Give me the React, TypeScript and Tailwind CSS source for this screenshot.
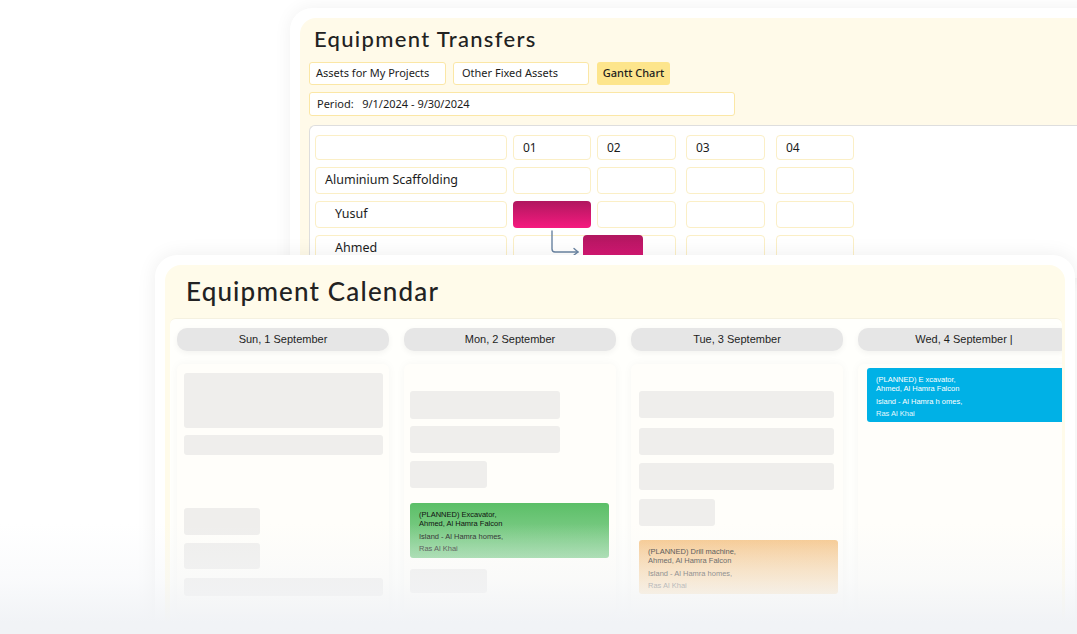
import type { ReactNode } from 'react'

const CELL = 'rounded-[4px] border border-[#fbefc6] bg-white'

const DAYS = [
    'Sun, 1 September',
    'Mon, 2 September',
    'Tue, 3 September',
    'Wed, 4 September |',
]

function Bar({ className }: { className: string }) {
    return <div className={`shrink-0 rounded-[3px] bg-[#efeeec] ${className}`} />
}

function GanttRow({
    label,
    indent,
    height,
    first,
}: {
    label?: string
    indent?: boolean
    height: string
    first?: ReactNode
}) {
    return (
        <div className={`flex ${height}`}>
            <div
                className={`${CELL} flex w-[192px] items-center text-[12.5px] text-[#1c1c1c] ${indent ? 'pl-[19px]' : 'pl-[9px]'}`}>
                {label}
            </div>
            {first ?? <div className={`${CELL} ml-[6px] w-[78px]`} />}
            <div className={`${CELL} ml-[6px] w-[79px]`} />
            <div className={`${CELL} ml-[10px] w-[79px]`} />
            <div className={`${CELL} ml-[11px] w-[78px]`} />
        </div>
    )
}

function HeaderCell({ text, className }: { text: string; className: string }) {
    return (
        <div
            className={`${CELL} flex items-center pl-[9px] text-[12px] text-[#1c1c1c] ${className}`}>
            {text}
        </div>
    )
}

function TransfersWindow() {
    return (
        <div className="absolute left-[290px] top-[8px] h-[270px] w-[820px] rounded-tl-[22px] bg-white p-[10px] pr-0 shadow-[0_0_18px_rgba(0,0,0,0.06)]">
            <div className="flex h-full flex-col rounded-tl-[16px] bg-[#fffae9] pl-[9px] pt-[7px] font-['Noto_Sans',sans-serif]">
                <h2 className="pl-[5px] font-['Lato',sans-serif] text-[22px] font-medium leading-[28px] tracking-[0.06em] text-[#222]">
                    Equipment Transfers
                </h2>
                <div className="mt-[9px] flex h-[23px] text-[11px] text-[#1c1c1c]">
                    <div className="flex w-[137px] items-center rounded-[3px] border border-[#fbe7a6] bg-white pl-[6px]">
                        Assets for My Projects
                    </div>
                    <div className="ml-[7px] flex w-[136px] items-center rounded-[3px] border border-[#fbe7a6] bg-white pl-[8px]">
                        Other Fixed Assets
                    </div>
                    <div className="ml-[8px] flex w-[73px] items-center justify-center rounded-[3px] bg-[#fde58c] font-medium">
                        Gantt Chart
                    </div>
                </div>
                <div className="mt-[7px] flex h-[24px] w-[426px] items-center rounded-[3px] border border-[#fbe7a6] bg-white pl-[7px] text-[11px] text-[#1c1c1c]">
                    Period:&nbsp;&nbsp;&nbsp;9/1/2024 - 9/30/2024
                </div>
                <div className="relative mt-[9px] flex flex-1 flex-col gap-[7px] rounded-tl-[6px] border-l border-t border-[#dedede] bg-white pl-[5px] pt-[9px]">
                    <div className="flex h-[25px]">
                        <div className={`${CELL} w-[192px]`} />
                        <HeaderCell text="01" className="ml-[6px] w-[78px]" />
                        <HeaderCell text="02" className="ml-[6px] w-[79px]" />
                        <HeaderCell text="03" className="ml-[10px] w-[79px]" />
                        <HeaderCell text="04" className="ml-[11px] w-[78px]" />
                    </div>
                    <GanttRow label="Aluminium Scaffolding" height="h-[27px]" />
                    <GanttRow
                        label="Yusuf"
                        indent
                        height="h-[27px]"
                        first={
                            <div className="ml-[6px] w-[78px] rounded-[4px] bg-gradient-to-b from-[#b0175f] to-[#f6197f]" />
                        }
                    />
                    <GanttRow label="Ahmed" indent height="h-[27px]" />
                    <svg
                        className="absolute left-[239px] top-[104px]"
                        width="32"
                        height="26"
                        viewBox="0 0 32 26"
                        fill="none"
                        stroke="#6a84a2"
                        strokeWidth="1.4"
                        strokeLinecap="round"
                        strokeLinejoin="round">
                        <path d="M3 1 V19 Q3 22 6 22 H29" />
                        <path d="M25 18.5 L29 22 L25 25" />
                    </svg>
                    <div className="absolute left-[273px] top-[109px] h-[27px] w-[60px] rounded-t-[4px] bg-gradient-to-b from-[#b0175f] to-[#e0177a]" />
                </div>
            </div>
        </div>
    )
}

type Tone = 'green' | 'orange' | 'blue'

const TONES: Record<Tone, { box: string; lines: string[] }> = {
    green: {
        box: 'bg-gradient-to-b from-[#5bbf67] to-[#93d59d]',
        lines: ['text-[#111]', 'text-[#222]', 'text-[#3a3a3a]'],
    },
    orange: {
        box: 'bg-gradient-to-b from-[#f6c68a] to-[#fbe6c6]',
        lines: ['text-[#2e2e2e]', 'text-[#4a4a4a]', 'text-[#777]'],
    },
    blue: {
        box: 'bg-[#00b1e6]',
        lines: ['text-white', 'text-white', 'text-white/90'],
    },
}

function EventCard({
    tone,
    lines,
    className,
}: {
    tone: Tone
    lines: [string, string, string, string]
    className: string
}) {
    const t = TONES[tone]
    return (
        <div
            className={`shrink-0 rounded-[3px] pl-[9px] pt-[7px] font-['Liberation_Sans',sans-serif] text-[7.5px] ${t.box} ${className}`}>
            <div className={`leading-[9px] ${t.lines[0]}`}>
                {lines[0]}
                <br />
                {lines[1]}
            </div>
            <div className={`mt-[3px] leading-[12px] ${t.lines[1]}`}>{lines[2]}</div>
            <div className={`leading-[12px] ${t.lines[2]}`}>{lines[3]}</div>
        </div>
    )
}

function DayColumn({ day, pad, children }: { day: string; pad: string; children: ReactNode }) {
    return (
        <div className="flex w-[212px] shrink-0 flex-col">
            <div className="flex h-[23px] items-center justify-center rounded-[10px] bg-[#e6e6e6] font-['Liberation_Sans',sans-serif] text-[11px] text-[#1e1e1e] shadow-[0_2px_6px_rgba(0,0,0,0.05)]">
                {day}
            </div>
            <div
                className={`mt-[13px] flex h-[250px] flex-col rounded-[6px] bg-[#fffefa] shadow-[0_0_10px_rgba(0,0,0,0.04)] ${pad}`}>
                {children}
            </div>
        </div>
    )
}

function CalendarWindow() {
    return (
        <div className="absolute left-[155px] top-[255px] h-[420px] w-[920px] rounded-[22px] bg-white p-[10px] shadow-[0_0_20px_rgba(0,0,0,0.07)]">
            <div className="flex h-full flex-col rounded-[16px] bg-[#fffbea] pt-[10px]">
                <h2 className="pl-[21px] font-['Lato',sans-serif] text-[26px] font-medium leading-[32px] tracking-[0.045em] text-[#222]">
                    Equipment Calendar
                </h2>
                <div className="ml-[5px] mr-[3px] mt-[11px] flex flex-1 gap-[15px] overflow-hidden rounded-t-[6px] border-t border-[#f5f1e0] bg-[#fffffc] pl-[7px] pt-[9px]">
                    <DayColumn day={DAYS[0]} pad="pl-[7px]">
                        <Bar className="mt-[9px] h-[55px] w-[199px]" />
                        <Bar className="mt-[7px] h-[20px] w-[199px]" />
                        <Bar className="mt-[53px] h-[27px] w-[76px]" />
                        <Bar className="mt-[8px] h-[26px] w-[76px]" />
                        <Bar className="mt-[9px] h-[18px] w-[199px]" />
                    </DayColumn>
                    <DayColumn day={DAYS[1]} pad="pl-[6px]">
                        <Bar className="mt-[27px] h-[28px] w-[150px]" />
                        <Bar className="mt-[7px] h-[27px] w-[150px]" />
                        <Bar className="mt-[8px] h-[27px] w-[77px]" />
                        <EventCard
                            tone="green"
                            className="mt-[15px] h-[55px] w-[199px]"
                            lines={[
                                '(PLANNED) Excavator,',
                                'Ahmed, Al Hamra Falcon',
                                'Island - Al Hamra homes,',
                                'Ras Al Khai',
                            ]}
                        />
                        <Bar className="mt-[11px] h-[24px] w-[77px]" />
                    </DayColumn>
                    <DayColumn day={DAYS[2]} pad="pl-[8px]">
                        <Bar className="mt-[27px] h-[27px] w-[195px]" />
                        <Bar className="mt-[10px] h-[27px] w-[195px]" />
                        <Bar className="mt-[8px] h-[27px] w-[195px]" />
                        <Bar className="mt-[9px] h-[27px] w-[76px]" />
                        <EventCard
                            tone="orange"
                            className="mt-[14px] h-[54px] w-[199px]"
                            lines={[
                                '(PLANNED) Drill machine,',
                                'Ahmed, Al Hamra Falcon',
                                'Island - Al Hamra homes,',
                                'Ras Al Khai',
                            ]}
                        />
                    </DayColumn>
                    <DayColumn day={DAYS[3]} pad="pl-[9px]">
                        <EventCard
                            tone="blue"
                            className="mt-[4px] h-[54px] w-[205px]"
                            lines={[
                                '(PLANNED) E xcavator,',
                                'Ahmed, Al Hamra Falcon',
                                'Island - Al Hamra h omes,',
                                'Ras Al Khai',
                            ]}
                        />
                    </DayColumn>
                </div>
            </div>
        </div>
    )
}

export default function App() {
    return (
        <div className="relative h-[634px] w-[1077px] overflow-hidden bg-white">
            <TransfersWindow />
            <CalendarWindow />
            {/* soft fade at the bottom of the illustration */}
            <div className="pointer-events-none absolute inset-x-0 bottom-0 h-[110px] bg-gradient-to-b from-[#f3f5f8]/0 from-0% via-[#f3f5f8]/45 via-50% to-[#f1f3f6] to-90%" />
        </div>
    )
}
